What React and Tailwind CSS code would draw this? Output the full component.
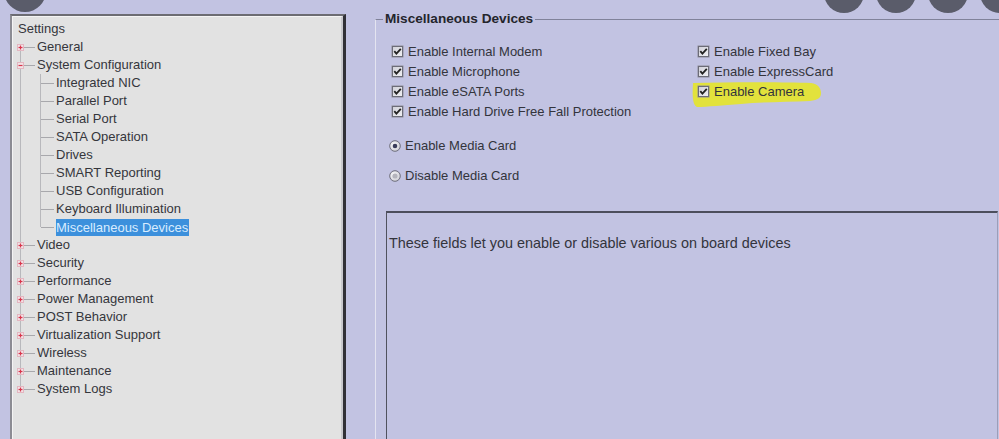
import React from "react";

const FONT = { fontFamily: '"Liberation Sans", Arial, sans-serif' };

function Check() {
  return (
    <svg width="13" height="13" viewBox="0 0 13 13" className="shrink-0">
      <defs>
        <linearGradient id="cbg" x1="0" y1="0" x2="1" y2="1">
          <stop offset="0" stopColor="#d0d0d8" />
          <stop offset="1" stopColor="#f0f0f4" />
        </linearGradient>
      </defs>
      <rect x="0.5" y="0.5" width="12" height="12" fill="#8e8e98" />
      <rect x="1.5" y="1.5" width="10" height="10" fill="url(#cbg)" stroke="#6c6c78" strokeWidth="1" />
      <path d="M3.3 6.2 L5.4 8.6 L9.8 3.8" fill="none" stroke="#222" strokeWidth="1.8" />
    </svg>
  );
}

function Radio({ on }) {
  return (
    <svg width="12" height="12" viewBox="0 0 12 12" className="shrink-0">
      <defs>
        <radialGradient id={on ? "rg1" : "rg0"} cx="0.4" cy="0.4" r="0.7">
          <stop offset="0" stopColor="#ffffff" />
          <stop offset="1" stopColor="#c8c8d0" />
        </radialGradient>
      </defs>
      <circle cx="6" cy="6" r="5.3" fill={`url(#${on ? "rg1" : "rg0"})`} stroke="#6e6e7c" strokeWidth="1" />
      {on && <circle cx="6" cy="6" r="2.3" fill="#3a3d5a" />}
      {!on && <circle cx="6" cy="6" r="2.6" fill="#b4b4bc" />}
    </svg>
  );
}

function CheckRow({ label, highlight }) {
  return (
    <div className="relative flex h-[20px] items-center gap-[4px]">
      {highlight && (
        <svg
          className="absolute left-[-6px] top-[1px]"
          width="132"
          height="27"
          viewBox="0 0 132 27"
        >
          <path
            d="M2 1 C40 0 90 0 120 1 C127 2 130 6 130 11 C130 16 127 18 119 19 C96 20 72 20 50 22 C32 23 16 25 6 25 C2 23 1 16 2 1 Z"
            fill="#e2e23c"
          />
        </svg>
      )}
      <div className="relative flex items-center gap-[4px]">
        <Check />
        <span className="text-[13px] leading-none text-[#33343c]">{label}</span>
      </div>
    </div>
  );
}

const tree = [
  { t: "Settings", lvl: 0 },
  { t: "General", lvl: 1, box: "+" },
  { t: "System Configuration", lvl: 1, box: "-" },
  { t: "Integrated NIC", lvl: 2 },
  { t: "Parallel Port", lvl: 2 },
  { t: "Serial Port", lvl: 2 },
  { t: "SATA Operation", lvl: 2 },
  { t: "Drives", lvl: 2 },
  { t: "SMART Reporting", lvl: 2 },
  { t: "USB Configuration", lvl: 2 },
  { t: "Keyboard Illumination", lvl: 2 },
  { t: "Miscellaneous Devices", lvl: 2, sel: true, last2: true },
  { t: "Video", lvl: 1, box: "+" },
  { t: "Security", lvl: 1, box: "+" },
  { t: "Performance", lvl: 1, box: "+" },
  { t: "Power Management", lvl: 1, box: "+" },
  { t: "POST Behavior", lvl: 1, box: "+" },
  { t: "Virtualization Support", lvl: 1, box: "+" },
  { t: "Wireless", lvl: 1, box: "+" },
  { t: "Maintenance", lvl: 1, box: "+" },
  { t: "System Logs", lvl: 1, box: "+", last1: true },
];

function TreeRow({ item, idx }) {
  if (item.lvl === 0) {
    return (
      <div className="flex h-[18px] items-center pl-[4px] text-[13px] text-[#35363c]">{item.t}</div>
    );
  }
  const first1 = idx === 1;
  const w = item.lvl === 1 ? 20 : 39;
  return (
    <div className="flex h-[18px] items-center pl-[3px]">
      <svg width={w} height="18" viewBox={`0 0 ${w} 18`} className="shrink-0">
        <line
          x1="3.5"
          y1={first1 ? 9 : 0}
          x2="3.5"
          y2={item.last1 ? 9 : 18}
          stroke="#b8b8bc"
          strokeWidth="1"
        />
        {item.lvl === 1 && (
          <>
            <line x1="7" y1="9.5" x2="18" y2="9.5" stroke="#a8a8ac" strokeWidth="1" />
            <rect x="0.5" y="6.5" width="6" height="6" fill="#f2e2e6" stroke="#e3b6c0" strokeWidth="1" />
            <line x1="1.5" y1="9.5" x2="5.5" y2="9.5" stroke="#d8364c" strokeWidth="1.2" />
            {item.box === "+" && (
              <line x1="3.5" y1="7.5" x2="3.5" y2="11.5" stroke="#d8364c" strokeWidth="1.2" />
            )}
          </>
        )}
        {item.lvl === 2 && (
          <>
            <line x1="23.5" y1="0" x2="23.5" y2={item.last2 ? 9 : 18} stroke="#b8b8bc" strokeWidth="1" />
            <line x1="24" y1="9.5" x2="37" y2="9.5" stroke="#a8a8ac" strokeWidth="1" />
          </>
        )}
      </svg>
      <span
        className={
          item.sel
            ? "h-[17px] bg-[#3c90dc] pr-[1px] text-[13px] leading-[17px] text-[#d8ecff]"
            : "text-[13px] text-[#35363c]"
        }
      >
        {item.t}
      </span>
    </div>
  );
}

export default function App() {
  return (
    <div
      className="relative flex h-[439px] w-[999px] items-start overflow-hidden bg-[#c2c3e2]"
      style={FONT}
    >
      {/* window control bubbles at the top edge */}
      <div className="absolute left-[4px] top-[-30px] h-[42px] w-[42px] rounded-full bg-[#5a5c6a]" />
      <div className="absolute right-[0px] top-[-27px] flex gap-[12px]">
        <div className="h-[40px] w-[40px] rounded-full bg-[#5a5c6a]" />
        <div className="h-[40px] w-[40px] rounded-full bg-[#5a5c6a]" />
        <div className="h-[40px] w-[40px] rounded-full bg-[#5a5c6a]" />
        <div className="mr-[-21px] h-[40px] w-[40px] rounded-full bg-[#5a5c6a]" />
      </div>

      {/* Left tree panel */}
      <div className="ml-[10px] mt-[14px] h-[440px] w-[336px] shrink-0 border-l-2 border-t-2 border-r-[3px] border-l-[#8c8c94] border-t-[#6c6c72] border-r-[#303036] bg-[#e2e2e2]">
        <div className="h-full border-l border-t border-r-2 border-l-[#f4f4f4] border-t-[#f4f4f4] border-r-[#c8c8cc] pl-[1px] pt-[3px]">
          {tree.map((it, i) => (
            <TreeRow key={it.t} item={it} idx={i} />
          ))}
        </div>
      </div>

      {/* Right: group box */}
      <div className="relative ml-[29px] mt-[19px] flex h-[430px] flex-1 flex-col border-l border-t border-l-[#e4e4f0] border-t-[#80829a]">
        <div className="absolute left-[7px] top-[-9px] bg-[#c2c3e2] px-[2px] text-[13.6px] font-bold leading-[16px] text-[#24252c]">
          Miscellaneous Devices
        </div>

        <div className="flex pl-[15px] pt-[21px]">
          <div className="flex w-[306px] flex-col">
            <CheckRow label="Enable Internal Modem" />
            <CheckRow label="Enable Microphone" />
            <CheckRow label="Enable eSATA Ports" />
            <CheckRow label="Enable Hard Drive Free Fall Protection" />
          </div>
          <div className="flex flex-col">
            <CheckRow label="Enable Fixed Bay" />
            <CheckRow label="Enable ExpressCard" />
            <CheckRow label="Enable Camera" highlight />
          </div>
        </div>

        <div className="ml-[13px] mt-[15px] flex h-[20px] items-center gap-[4px]">
          <Radio on />
          <span className="text-[13px] text-[#33343c]">Enable Media Card</span>
        </div>
        <div className="ml-[13px] mt-[10px] flex h-[20px] items-center gap-[4px]">
          <Radio />
          <span className="text-[13px] text-[#33343c]">Disable Media Card</span>
        </div>

        <div className="ml-[10px] mr-[1px] mt-[25px] flex-1 border-l border-t-2 border-r border-l-[#50525e] border-t-[#4c4e5c] border-r-[#9c9eb8] pl-[2px] pt-[21px]">
          <p className="text-[14.4px] leading-[18px] text-[#33343c]">
            These fields let you enable or disable various on board devices
          </p>
        </div>
      </div>
    </div>
  );
}
